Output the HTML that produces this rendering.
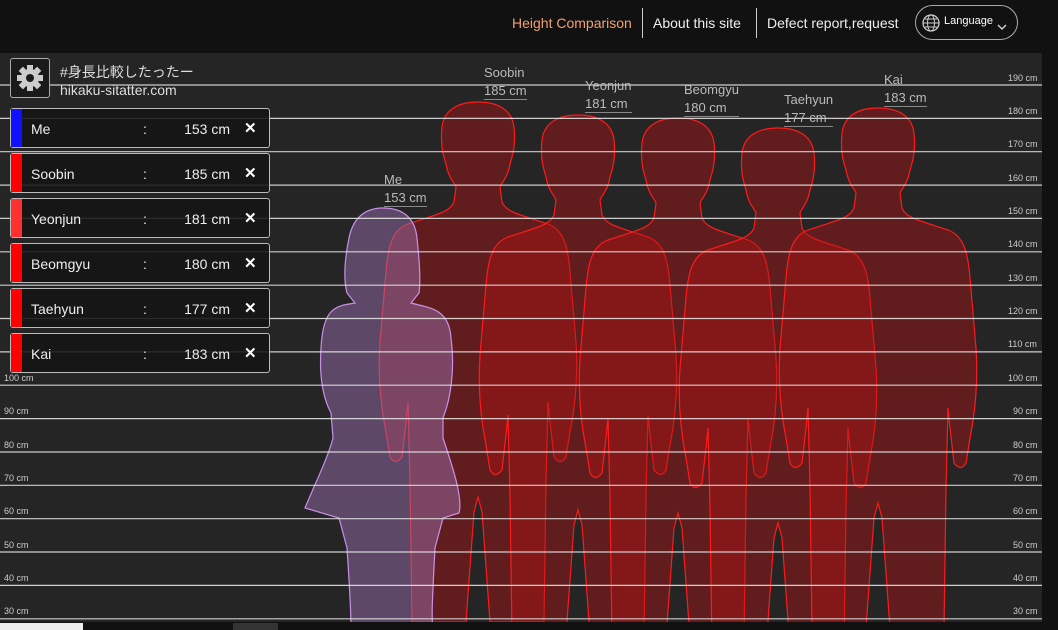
<!DOCTYPE html>
<html><head><meta charset="utf-8"><style>
*{margin:0;padding:0;box-sizing:border-box}
body{width:1058px;height:630px;background:#111;overflow:hidden;position:relative;font-family:"Liberation Sans","Noto Sans CJK JP",sans-serif;color:#ddd}
.nav{position:absolute;top:0;left:0;width:1058px;height:53px;background:#111}
.nav span{position:absolute;top:15px;font-size:14px}
.div{position:absolute;top:8px;width:1px;height:30px;background:#ccc}
.lang{position:absolute;left:915px;top:5px;width:103px;height:35px;border:1px solid #aaa;border-radius:18px}
.chart{position:absolute;left:0;top:53px;width:1042px;height:569px;background:#252525;overflow:hidden}
.panel{position:absolute;left:10px;width:260px;height:40px;background:rgba(20,20,20,0.88);border:1px solid #bbb;border-radius:3px;font-size:14px;color:#eee}
.panel .bar{position:absolute;left:0;top:0;width:11px;height:38px}
.panel .n{position:absolute;left:20px;top:12px}
.panel .c{position:absolute;left:132px;top:12px}
.panel .v{position:absolute;right:39px;top:12px}
.panel .x{position:absolute;left:233px;top:10px;font-weight:bold;font-size:15px;color:#fff}
.lbl{position:absolute;font-size:13px;color:#bbb}
.lbl b{display:block;font-weight:normal;border-bottom:1px solid #888;padding-bottom:1px;margin-top:3px}
</style></head><body>
<div class="nav">
<span style="left:512px;color:#f2a070">Height Comparison</span>
<div class="div" style="left:642px"></div>
<span style="left:653px;color:#eee">About this site</span>
<div class="div" style="left:756px"></div>
<span style="left:767px;color:#eee">Defect report,request</span>
<div class="lang"><svg width="103" height="35" style="position:absolute;left:0;top:0"><circle cx="15" cy="17" r="8" fill="none" stroke="#ccc" stroke-width="1.3"/><ellipse cx="15" cy="17" rx="3.5" ry="8" fill="none" stroke="#ccc"/><line x1="7" y1="17" x2="23" y2="17" stroke="#ccc"/><line x1="9" y1="13" x2="21" y2="13" stroke="#ccc"/><line x1="9" y1="21" x2="21" y2="21" stroke="#ccc"/><path d="M82 19 l4 4 l4 -4" fill="none" stroke="#ccc" stroke-width="1.5"/></svg><span style="position:absolute;left:28px;top:9px;font-size:11px;color:#fff">Language</span></div>
</div>
<div class="chart">
<svg width="1042" height="569" style="position:absolute;left:0;top:0">
<defs>
<path id="m" d="M100,0 C120,0 134,8 136,25 C138,45 134,55 132,62 C130,75 124,80 122,85 L124,100 C128,110 140,112 170,122 C186,128 190,145 192,170 L198,240 C200,270 198,300 192,330 L188,355 C184,362 180,360 176,355 L172,320 L170,300 L168,380 L166,520 L112,520 L104,410 L100,395 L96,410 L88,520 L34,520 L32,380 L30,300 L28,320 L24,355 C20,360 16,362 12,355 L8,330 C2,300 0,270 2,240 L8,170 C10,145 14,128 30,122 C60,112 72,110 76,100 L78,85 C76,80 70,75 68,62 C66,55 62,45 64,25 C66,8 80,0 100,0 Z"/>
</defs>
<g fill="rgba(180,20,20,0.42)" stroke="#ff1a1a" stroke-width="1.2">
<use href="#m" transform="translate(378,49)"/>
<use href="#m" transform="translate(478,62)"/>
<use href="#m" transform="translate(578,65)"/>
<use href="#m" transform="translate(678,75)"/>
<use href="#m" transform="translate(778,55)"/>
</g>
<path transform="translate(303,155)" fill="rgba(150,110,170,0.5)" stroke="#c890e8" stroke-width="1.2" d="M80,0 C100,0 112,10 114,30 C116,50 118,70 116,85 L108,95 C126,100 146,100 148,130 C152,160 148,190 140,210 L140,230 C150,260 160,290 156,305 L140,310 L132,340 C130,380 128,410 130,420 L48,420 C48,400 46,370 44,340 L36,310 L2,300 C10,280 25,250 30,230 L28,205 C20,190 16,170 18,140 C20,100 32,98 52,95 L44,85 C40,70 42,50 46,30 C50,10 62,0 80,0 Z"/>
<g stroke="rgba(235,235,235,0.85)" stroke-width="1.2">
<line x1="0" x2="1042" y1="32" y2="32"/><line x1="0" x2="1042" y1="65.4" y2="65.4"/><line x1="0" x2="1042" y1="98.7" y2="98.7"/><line x1="0" x2="1042" y1="132.1" y2="132.1"/><line x1="0" x2="1042" y1="165.4" y2="165.4"/><line x1="0" x2="1042" y1="198.8" y2="198.8"/><line x1="0" x2="1042" y1="232.2" y2="232.2"/><line x1="0" x2="1042" y1="265.5" y2="265.5"/><line x1="0" x2="1042" y1="298.9" y2="298.9"/><line x1="0" x2="1042" y1="332.2" y2="332.2"/><line x1="0" x2="1042" y1="365.6" y2="365.6"/><line x1="0" x2="1042" y1="399" y2="399"/><line x1="0" x2="1042" y1="432.3" y2="432.3"/><line x1="0" x2="1042" y1="465.7" y2="465.7"/><line x1="0" x2="1042" y1="499" y2="499"/><line x1="0" x2="1042" y1="532.4" y2="532.4"/><line x1="0" x2="1042" y1="565.8" y2="565.8"/>
</g>
<g font-family="Liberation Sans" font-size="9" fill="#ccc">
<text x="1008" y="28">190 cm</text><text x="1008" y="61">180 cm</text><text x="1008" y="94">170 cm</text><text x="1008" y="128">160 cm</text><text x="1008" y="161">150 cm</text><text x="1008" y="194">140 cm</text><text x="1008" y="228">130 cm</text><text x="1008" y="261">120 cm</text><text x="1008" y="294">110 cm</text><text x="1008" y="328">100 cm</text><text x="1013" y="361">90 cm</text><text x="1013" y="395">80 cm</text><text x="1013" y="428">70 cm</text><text x="1013" y="461">60 cm</text><text x="1013" y="495">50 cm</text><text x="1013" y="528">40 cm</text><text x="1013" y="561">30 cm</text>
<text x="4" y="328">100 cm</text><text x="4" y="361">90 cm</text><text x="4" y="395">80 cm</text><text x="4" y="428">70 cm</text><text x="4" y="461">60 cm</text><text x="4" y="495">50 cm</text><text x="4" y="528">40 cm</text><text x="4" y="561">30 cm</text>
</g>
</svg>
<div class="lbl" style="left:484px;top:12px">Soobin<b>185 cm</b></div>
<div class="lbl" style="left:585px;top:25px">Yeonjun<b>181 cm</b></div>
<div class="lbl" style="left:684px;top:29px">Beomgyu<b>180 cm</b></div>
<div class="lbl" style="left:784px;top:39px">Taehyun<b>177 cm</b></div>
<div class="lbl" style="left:884px;top:19px">Kai<b>183 cm</b></div>
<div class="lbl" style="left:384px;top:119px">Me<b>153 cm</b></div>
<div style="position:absolute;left:10px;top:5px;width:40px;height:40px;border:1px solid #aaa;border-radius:3px;background:#1a1a1a">
<svg width="38" height="38"><g transform="translate(19,19)" fill="#ccc"><circle r="9"/><g><rect x="-3" y="-13" width="6" height="26"/><rect x="-3" y="-13" width="6" height="26" transform="rotate(45)"/><rect x="-3" y="-13" width="6" height="26" transform="rotate(90)"/><rect x="-3" y="-13" width="6" height="26" transform="rotate(135)"/></g><circle r="4" fill="#1a1a1a"/></g></svg></div>
<div style="position:absolute;left:60px;top:10px;font-size:14px;color:#ddd;line-height:18px">#身長比較したったー<br>hikaku-sitatter.com</div>
<div class="panel" style="top:55px"><div class="bar" style="background:#1010ff"></div><span class="n">Me</span><span class="c">:</span><span class="v">153 cm</span><span class="x">✕</span></div>
<div class="panel" style="top:100px"><div class="bar" style="background:#ff0000"></div><span class="n">Soobin</span><span class="c">:</span><span class="v">185 cm</span><span class="x">✕</span></div>
<div class="panel" style="top:145px"><div class="bar" style="background:#ff3030"></div><span class="n">Yeonjun</span><span class="c">:</span><span class="v">181 cm</span><span class="x">✕</span></div>
<div class="panel" style="top:190px"><div class="bar" style="background:#ff0000"></div><span class="n">Beomgyu</span><span class="c">:</span><span class="v">180 cm</span><span class="x">✕</span></div>
<div class="panel" style="top:235px"><div class="bar" style="background:#ff0000"></div><span class="n">Taehyun</span><span class="c">:</span><span class="v">177 cm</span><span class="x">✕</span></div>
<div class="panel" style="top:280px"><div class="bar" style="background:#ff0000"></div><span class="n">Kai</span><span class="c">:</span><span class="v">183 cm</span><span class="x">✕</span></div>
</div>
<div style="position:absolute;left:0;top:623px;width:83px;height:7px;background:#eee"></div>
<div style="position:absolute;left:233px;top:623px;width:45px;height:7px;background:#333"></div>
</body></html>
